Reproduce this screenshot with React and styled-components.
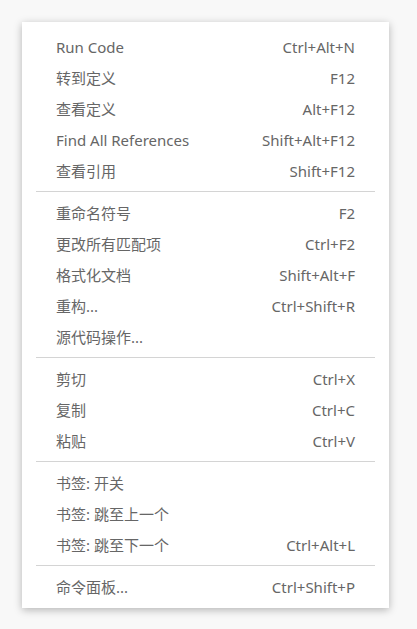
import React from "react";
import styled, { createGlobalStyle } from "styled-components";

const Global = createGlobalStyle`
  html, body { margin: 0; padding: 0; background: #f8f8f8; }
  body { width: 417px; height: 629px; overflow: hidden; }
`;

const Page = styled.div`
  padding: 22px 28px 0 22px;
`;

const Menu = styled.div`
  width: 367px;
  background: #ffffff;
  box-shadow: 0 2px 8px rgba(0, 0, 0, 0.28);
  padding: 9px 0 6px;
  box-sizing: border-box;
  font-family: "Segoe UI", "Noto Sans", "Noto Sans CJK SC", sans-serif;
  font-size: 15px;
  color: #666666;
`;

const Row = styled.div`
  height: 31px;
  display: flex;
  align-items: center;
  justify-content: space-between;
  padding: 0 34px 0 34px;
`;

const Label = styled.span`
  white-space: nowrap;
`;

const Key = styled.span`
  white-space: nowrap;
`;

const Sep = styled.div`
  height: 1px;
  background: #d4d4d4;
  margin: 5px 14px 5px;
`;

const groups = [
  [
    ["Run Code", "Ctrl+Alt+N"],
    ["转到定义", "F12"],
    ["查看定义", "Alt+F12"],
    ["Find All References", "Shift+Alt+F12"],
    ["查看引用", "Shift+F12"],
  ],
  [
    ["重命名符号", "F2"],
    ["更改所有匹配项", "Ctrl+F2"],
    ["格式化文档", "Shift+Alt+F"],
    ["重构...", "Ctrl+Shift+R"],
    ["源代码操作...", ""],
  ],
  [
    ["剪切", "Ctrl+X"],
    ["复制", "Ctrl+C"],
    ["粘贴", "Ctrl+V"],
  ],
  [
    ["书签: 开关", ""],
    ["书签: 跳至上一个", ""],
    ["书签: 跳至下一个", "Ctrl+Alt+L"],
  ],
  [["命令面板...", "Ctrl+Shift+P"]],
];

export default function App() {
  return (
    <>
      <Global />
      <Page>
        <Menu>
          {groups.map((g, gi) => (
            <React.Fragment key={gi}>
              {gi > 0 && <Sep />}
              {g.map(([l, k]) => (
                <Row key={l}>
                  <Label>{l}</Label>
                  <Key>{k}</Key>
                </Row>
              ))}
            </React.Fragment>
          ))}
        </Menu>
      </Page>
    </>
  );
}
